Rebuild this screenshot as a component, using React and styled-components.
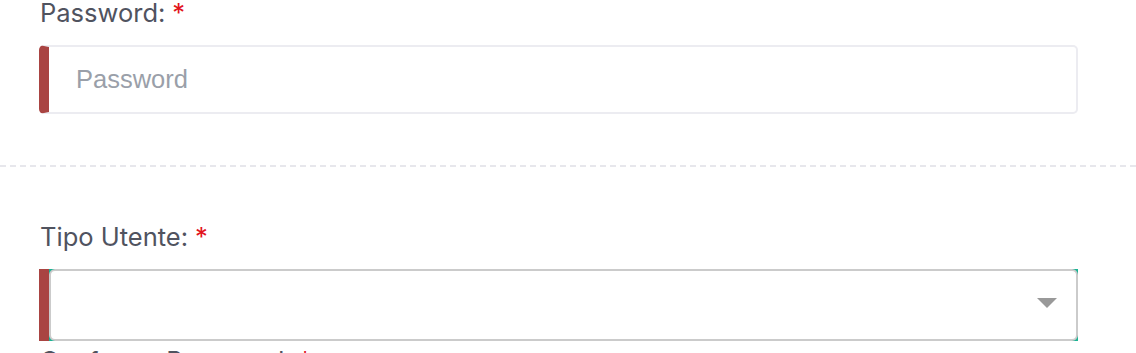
import React from 'react';
import styled, { createGlobalStyle } from 'styled-components';

const GlobalStyle = createGlobalStyle`
  html, body {
    margin: 0;
    padding: 0;
    background: #fff;
    overflow: hidden;
  }
`;

const Form = styled.form`
  width: 1136px;
  margin-top: -7px;
  font-family: Inter, "Noto Sans", sans-serif;
`;

const FieldGroup = styled.div`
  padding: ${p => p.$top || 0}px 58px ${p => p.$bottom || 0}px 39px;
  display: flex;
  flex-direction: column;
`;

const Label = styled.label`
  display: block;
  font-size: 25.5px;
  line-height: 40px;
  color: #50535f;
  padding-left: 1px;
  margin-bottom: ${p => p.$gap || 0}px;
`;

const Required = styled.span`
  color: #e2141c;
  margin-left: 7px;
`;

const TextInput = styled.input`
  box-sizing: border-box;
  width: 100%;
  height: 69px;
  border: 2px solid #ececf1;
  border-left: 10px solid ${p => (p.$invalid ? '#a94442' : '#ececf1')};
  border-radius: 5px;
  padding: 0 0 0 27px;
  font-family: "Liberation Sans", Arial, sans-serif;
  font-size: 25.5px;
  color: #333;
  outline: none;

  &::placeholder {
    color: #9a9fa9;
  }
`;

const Divider = styled.hr`
  margin: 51px 0 0;
  border: 0;
  height: 2px;
  background: repeating-linear-gradient(
    to right,
    #e7e7ec 0,
    #e7e7ec 6px,
    transparent 6px,
    transparent 10px
  );
`;

const SelectWrap = styled.div`
  position: relative;
  display: flex;
  height: 72px;
  border-left: 10px solid ${p => (p.$invalid ? '#a94442' : 'transparent')};
  background: #1bb394;
`;

const Select = styled.select`
  flex: 1;
  appearance: none;
  border: 2px solid #cbcbcb;
  border-radius: 6px;
  background: #fff;
  font-family: "Liberation Sans", Arial, sans-serif;
  font-size: 22px;
  outline: none;
`;

const Caret = styled.span`
  position: absolute;
  right: 21px;
  top: 29px;
  width: 0;
  height: 0;
  border-left: 10px solid transparent;
  border-right: 10px solid transparent;
  border-top: 10px solid #999;
  pointer-events: none;
`;

const App = () => {
  return (
    <>
      <GlobalStyle />
      <Form onSubmit={e => e.preventDefault()}>
        <FieldGroup>
          <Label $gap={12}>
            Password:<Required>*</Required>
          </Label>
          <TextInput type="password" placeholder="Password" $invalid />
        </FieldGroup>

        <Divider />

        <FieldGroup $top={50}>
          <Label $gap={12}>
            Tipo Utente:<Required>*</Required>
          </Label>
          <SelectWrap $invalid>
            <Select defaultValue="">
              <option value="" />
              <option value="admin">Amministratore</option>
              <option value="user">Utente</option>
            </Select>
            <Caret />
          </SelectWrap>
          <Label>
            Conferma Password:<Required>*</Required>
          </Label>
        </FieldGroup>
      </Form>
    </>
  );
};

export default App;
